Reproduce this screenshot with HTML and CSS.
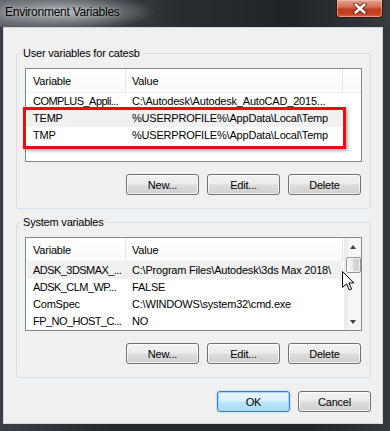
FILE: index.html
```html
<!DOCTYPE html>
<html lang="en">
<head>
    <meta charset="UTF-8">
    <meta name="viewport" content="width=device-width, initial-scale=1.0">
    <title>Environment Variables</title>
    <link rel="stylesheet" href="styles.css">
</head>
<body>
    <div class="window">
        <div class="titlebar">
            <span class="title">Environment Variables</span>
            <button class="close" aria-label="Close">
                <svg width="14" height="11" viewBox="0 0 14 11">
                    <path d="M2.5 1.5 L11.5 9.5 M11.5 1.5 L2.5 9.5" stroke="#5a1e12" stroke-width="4.2" stroke-linecap="round"/>
                    <path d="M2.5 1.5 L11.5 9.5 M11.5 1.5 L2.5 9.5" stroke="#fff" stroke-width="2.4" stroke-linecap="round"/>
                </svg>
            </button>
        </div>

        <div class="client">
            <fieldset class="group">
                <legend>User variables for catesb</legend>
                <div class="list">
                    <div class="list-body">
                        <div class="list-head">
                            <span class="head-name">Variable</span>
                            <span class="head-value">Value</span>
                        </div>
                        <div class="row">
                            <span class="cell-name tight">COMPLUS_Appli...</span>
                            <span class="cell-value">C:\Autodesk\Autodesk_AutoCAD_2015...</span>
                        </div>
                        <div class="row selected">
                            <span class="cell-name">TEMP</span>
                            <span class="cell-value">%USERPROFILE%\AppData\Local\Temp</span>
                        </div>
                        <div class="row">
                            <span class="cell-name">TMP</span>
                            <span class="cell-value">%USERPROFILE%\AppData\Local\Temp</span>
                        </div>
                    </div>
                    <div class="callout"></div>
                </div>
                <div class="buttons">
                    <button class="btn">New...</button>
                    <button class="btn">Edit...</button>
                    <button class="btn">Delete</button>
                </div>
            </fieldset>

            <fieldset class="group group-system">
                <legend>System variables</legend>
                <div class="list">
                    <div class="list-body">
                        <div class="list-head">
                            <span class="head-name">Variable</span>
                            <span class="head-value">Value</span>
                        </div>
                        <div class="row selected">
                            <span class="cell-name tight">ADSK_3DSMAX_...</span>
                            <span class="cell-value">C:\Program Files\Autodesk\3ds Max 2018\</span>
                        </div>
                        <div class="row">
                            <span class="cell-name tight">ADSK_CLM_WP...</span>
                            <span class="cell-value">FALSE</span>
                        </div>
                        <div class="row">
                            <span class="cell-name">ComSpec</span>
                            <span class="cell-value">C:\WINDOWS\system32\cmd.exe</span>
                        </div>
                        <div class="row">
                            <span class="cell-name tight">FP_NO_HOST_C...</span>
                            <span class="cell-value">NO</span>
                        </div>
                    </div>
                    <div class="scrollbar">
                        <span class="arrow arrow-up"></span>
                        <span class="thumb"></span>
                        <span class="track"></span>
                        <span class="arrow arrow-down"></span>
                    </div>
                    <svg class="cursor" width="13" height="20" viewBox="0 0 13 20">
                        <path d="M0.5 0.5 V16.5 L4.5 12.8 L7.3 19 L9.6 18 L6.9 11.9 H11.8 Z" fill="#fff" stroke="#000" stroke-width="1" stroke-linejoin="miter"/>
                    </svg>
                </div>
                <div class="buttons">
                    <button class="btn">New...</button>
                    <button class="btn">Edit...</button>
                    <button class="btn">Delete</button>
                </div>
            </fieldset>

            <div class="dialog-buttons">
                <button class="btn btn-default">OK</button>
                <button class="btn">Cancel</button>
            </div>
        </div>
    </div>
</body>
</html>
```

FILE: styles.css
```css
* {
    margin: 0;
    padding: 0;
    box-sizing: border-box;
}

body {
    background: #1d2024;
    font-family: "Liberation Sans", Arial, sans-serif;
    font-size: 11px;
    letter-spacing: -0.2px;
    color: #000;
}

.window {
    width: 390px;
    height: 431px;
    display: flex;
    flex-direction: column;
    background: linear-gradient(to right, #3a3e44, #24272c 30%, #22252a 80%, #34383d);
}

/* title bar */

.titlebar {
    height: 27px;
    display: flex;
    align-items: flex-start;
    background:
        radial-gradient(ellipse 95px 18px at 62px 12px, rgba(196, 200, 205, 0.85), rgba(196, 200, 205, 0) 100%),
        linear-gradient(to right, #5c6066, #2a2d32 45%, #1f2226 75%, #383b40);
}

.title {
    flex: 1;
    margin: 4px 0 0 5px;
    font-size: 12px;
    line-height: 16px;
    letter-spacing: -0.25px;
    color: #000;
    text-shadow: 0 0 4px rgba(255, 255, 255, 0.6);
}

.close {
    width: 47px;
    height: 18px;
    margin-right: 7px;
    display: flex;
    align-items: center;
    justify-content: center;
    border: 1px solid #3b150e;
    border-top: none;
    border-radius: 0 0 4px 4px;
    background: linear-gradient(#e4a08f 0%, #d5705a 40%, #c13b20 55%, #c4401f 80%, #dc6a45 100%);
    box-shadow: inset 0 0 0 1px rgba(255, 220, 200, 0.45);
}

/* client area */

.client {
    flex: 1;
    margin: 0 7px 7px 3px;
    background: #f0f0f0;
    border: 1px solid #d3d7db;
    display: flex;
    flex-direction: column;
}

.group {
    margin: 18px 11px 0 12px;
    padding: 7px 8px 13px 8px;
    border: 1px solid #d5dfe5;
    border-radius: 3px;
}

.group-system {
    margin-top: 6px;
}

.group legend {
    margin-left: -4px;
    padding: 0 2px;
    line-height: 15px;
}

/* list views */

.list {
    position: relative;
    height: 94px;
    display: flex;
    background: #fff;
    border: 1px solid #828790;
}

.list-body {
    flex: 1;
    overflow: hidden;
}

.list-head {
    height: 24px;
    display: flex;
    align-items: center;
    background: linear-gradient(#fff, #fafafa);
    border-bottom: 1px solid #efefef;
}

.head-name {
    width: 100px;
    height: 100%;
    padding-left: 7px;
    display: flex;
    align-items: center;
    border-right: 1px solid #e5e5e5;
}

.head-value {
    width: 217px;
    height: 100%;
    padding-left: 6px;
    display: flex;
    align-items: center;
    border-right: 1px solid #e5e5e5;
}

.row {
    width: 315px;
    height: 17px;
    margin-left: 1px;
    display: flex;
    line-height: 17px;
    white-space: nowrap;
}

.row.selected {
    background: #f0f0f0;
}

.cell-name {
    width: 98px;
    padding-left: 6px;
    overflow: hidden;
}

.cell-name.tight {
    letter-spacing: -0.55px;
}

.cell-value {
    flex: 1;
    padding-left: 7px;
    overflow: hidden;
}

.callout {
    position: absolute;
    left: -3px;
    top: 38px;
    width: 323px;
    height: 42px;
    border: 3px solid #ec0b12;
    box-shadow: 2px 2px 3px rgba(0, 0, 0, 0.3);
}

.scrollbar {
    width: 17px;
    display: flex;
    flex-direction: column;
    align-items: center;
    background: linear-gradient(to right, #e9e9e9, #f6f6f6 30%, #f6f6f6);
    border-left: 1px solid #ececec;
}

.arrow {
    height: 17px;
    display: flex;
    align-items: center;
    justify-content: center;
}

.arrow::after {
    content: "";
    border-left: 3.5px solid transparent;
    border-right: 3.5px solid transparent;
}

.arrow-up::after {
    border-bottom: 4px solid #3d3d3d;
}

.arrow-down::after {
    border-top: 4px solid #3d3d3d;
}

.thumb {
    width: 15px;
    height: 16px;
    margin-top: 2px;
    border: 1px solid #979797;
    border-radius: 2px;
    background: linear-gradient(to right, #f4f4f4, #e8e8e8 50%, #d8d8d8 50%, #cfcfcf);
    box-shadow: inset 0 0 0 1px rgba(255, 255, 255, 0.7);
}

.track {
    flex: 1;
}

.cursor {
    position: absolute;
    left: 316px;
    top: 33px;
}

/* buttons */

.buttons,
.dialog-buttons {
    display: flex;
    justify-content: flex-end;
    gap: 8px;
}

.buttons {
    margin-top: 12px;
    padding-right: 1px;
}

.dialog-buttons {
    margin: 13px 11px 0 0;
}

.btn {
    width: 73px;
    height: 21px;
    font: inherit;
    letter-spacing: inherit;
    color: #000;
    border: 1px solid #707070;
    border-radius: 3px;
    background: linear-gradient(#f2f2f2 0%, #ebebeb 48%, #dddddd 52%, #cfcfcf 100%);
    box-shadow: inset 0 0 0 1px rgba(255, 255, 255, 0.75);
}

.btn-default {
    border-color: #3c7fb1;
    background: linear-gradient(#eaf6fd 0%, #d9f0fc 48%, #bee6fd 52%, #a7d9f5 100%);
    box-shadow: inset 0 0 0 1px #a6d8f7, 0 0 2px rgba(60, 160, 230, 0.5);
}
```
